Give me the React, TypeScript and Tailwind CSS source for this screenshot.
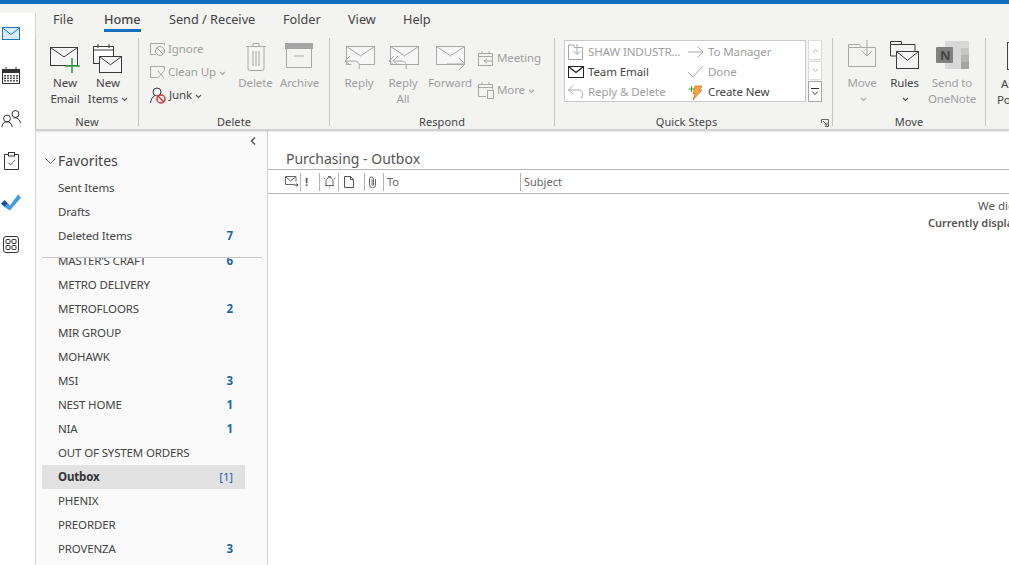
import React from "react";

const D = "#a8a8a8";
const K = "#3a3a3a";

const Svg = ({ w, h, children, className = "" }: { w: number; h: number; children: React.ReactNode; className?: string }) => (
  <svg width={w} height={h} viewBox={`0 0 ${w} ${h}`} fill="none" className={`block shrink-0 ${className}`}>
    {children}
  </svg>
);

const Chev = ({ c = "#555", s = 7 }: { c?: string; s?: number }) => (
  <svg width={s} height={5} viewBox="0 0 7 5" fill="none" className="inline-block ml-[3px] align-middle">
    <path d="M1 1l2.500 2.500L6 1" stroke={c} strokeWidth="1.100" />
  </svg>
);

const Env = ({ x, y, w, h, c, fill = "#f6f6f6" }: { x: number; y: number; w: number; h: number; c: string; fill?: string }) => (
  <g>
    <rect x={x + 0.5} y={y + 0.5} width={w} height={h} fill={fill} stroke={c} />
    <path d={`M${x + 0.5} ${y + 0.5}L${x + w / 2 + 0.5} ${y + h * 0.55}L${x + w + 0.5} ${y + 0.5}`} stroke={c} />
  </g>
);

const Big = ({ icon, label, cx, dis }: { icon: React.ReactNode; label: React.ReactNode; cx: number; dis?: boolean }) => (
  <div className={`flex flex-col items-center text-center leading-[16px] ${dis ? "text-[#a0a0a0]" : "text-[#444]"}`} style={{ width: cx }}>
    <div className="h-[35px] flex items-end justify-center">{icon}</div>
    <div className="mt-[2px] whitespace-nowrap">{label}</div>
  </div>
);

const Group = ({ w, label, children, right, labelClass = "" }: { w: number; label: string; children: React.ReactNode; right?: React.ReactNode; labelClass?: string }) => (
  <div className="relative flex flex-col shrink-0 border-r border-[#c6c6c6] mt-[2px] mb-[3px]" style={{ width: w }}>
    <div className="flex flex-1 min-h-0">{children}</div>
    <div className={`text-center text-[#444] leading-[14px] h-[14px] text-[11px] tracking-[0.1px] -mb-[3px] ${labelClass}`}>{label}</div>
    {right}
  </div>
);

const Small = ({ icon, text, dis }: { icon: React.ReactNode; text: React.ReactNode; dis?: boolean }) => (
  <div className={`flex items-center h-[20px] gap-[3px] whitespace-nowrap ${dis ? "text-[#a0a0a0]" : "text-[#444]"}`}>
    {icon}
    <span>{text}</span>
  </div>
);

function Rail() {
  return (
    <div className="w-[36px] shrink-0 mt-[9px] bg-white border-r border-[#d4d4d4] flex flex-col items-center pr-[13px] pt-[14px]">
      <Svg w={18} h={13}>
        <rect x=".5" y=".5" width="17" height="12" fill="#d9ecfa" stroke="#1b76c4" />
        <path d="M.5 1L9 7.500 17.500 1" stroke="#1b76c4" />
      </Svg>
      <Svg w={18} h={17} className="mt-[27px]">
        <rect x=".5" y="2.500" width="17" height="14" stroke="#333" />
        <rect x="1" y="3" width="16" height="3" fill="#333" />
        <path d="M4 0v3M14 0v3" stroke="#333" />
        {[8, 10.5, 13].map((y) => [3, 6, 9, 12, 15].map((x) => <rect key={`${x}${y}`} x={x - 0.8} y={y} width="1.600" height="1.600" fill="#333" />))}
      </Svg>
      <Svg w={20} h={17} className="mt-[26px]">
        <circle cx="6" cy="8.500" r="3.400" stroke="#333" />
        <path d="M.8 17c.5-3.600 2.400-5.300 5.200-5.300s4.700 1.700 5.200 5.300" stroke="#333" />
        <circle cx="14.500" cy="4" r="3.500" stroke="#333" />
        <path d="M12.500 8c2-.6 6 .2 7 5" stroke="#333" />
      </Svg>
      <Svg w={15} h={18} className="mt-[25px]">
        <path d="M4.500 2.500H.5v15h14v-15h-4" stroke="#333" />
        <rect x="4.500" y=".5" width="6" height="3.500" stroke="#333" fill="#fff" />
        <path d="M4 10.500l2.500 2.500L11 8" stroke="#666" />
      </Svg>
      <Svg w={20} h={17} className="mt-[24px]">
        <path d="M0 9.500L3.500 6l3.500 3.500L3.500 13z" fill="#1e4fa8" />
        <path d="M3.500 13L7 9.500l2 2L17 .5l3 3L9 16.500z" fill="#3f9be8" />
      </Svg>
      <Svg w={16} h={17} className="mt-[25px]">
        <rect x=".5" y=".5" width="15" height="16" rx="2.500" stroke="#333" />
        <rect x="3" y="3.500" width="4" height="4" rx=".6" stroke="#333" />
        <rect x="9" y="3.500" width="4" height="4" rx=".6" stroke="#333" />
        <rect x="3" y="9.500" width="4" height="4" rx=".6" stroke="#333" />
        <rect x="9" y="9.500" width="4" height="4" rx=".6" stroke="#333" />
      </Svg>
    </div>
  );
}

function Tabs() {
  return (
    <div className="h-[32px] flex items-start pl-[17px] pt-[3px] text-[12.700px] text-[#444] shrink-0">
      <div className="w-[51px] pt-[3px] leading-[18px]">File</div>
      <div className="w-[65px] pt-[3px] leading-[18px]">
        <span className="inline-block border-b-[3px] border-[#106ebe] pb-[1px] font-medium">Home</span>
      </div>
      <div className="w-[114px] pt-[3px] leading-[18px]">Send / Receive</div>
      <div className="w-[65px] pt-[3px] leading-[18px]">Folder</div>
      <div className="w-[55px] pt-[3px] leading-[18px]">View</div>
      <div className="pt-[3px] leading-[18px]">Help</div>
    </div>
  );
}

function Ribbon() {
  return (
    <div className="relative z-10 flex h-[94px] shrink-0 text-[11.500px] tracking-[-0.100px] shadow-[0_1px_2px_rgba(0,0,0,0.25)] border-b border-[#d0d0d0]">
      <Group w={103} label="New">
        <div className="flex pl-[8px]">
          <Big
            cx={42}
            label={<>New<br />Email</>}
            icon={
              <Svg w={32} h={30}>
                <Env x={1} y={4} w={27} h={18} c={K} />
                <path d="M23 15v15M16 23h15" stroke="#2f9e44" strokeWidth="1.500" />
              </Svg>
            }
          />
          <Big
            cx={44}
            label={<>New<br />Items<Chev /></>}
            icon={
              <Svg w={30} h={29}>
                <rect x=".5" y="2.500" width="20" height="17" stroke={K} fill="#fff" />
                <path d="M.5 6h20M5 0v4M16 0v4" stroke={K} />
                <Env x={6} y={12} w={22} h={16} c={K} />
              </Svg>
            }
          />
        </div>
      </Group>
      <Group w={191} label="Delete">
        <div className="flex">
          <div className="flex flex-col w-[97px] pl-[11px] pt-[1px] gap-[3px]">
            <Small dis text="Ignore" icon={<Svg w={15} h={14}><path d="M.5 1.500h14v2M.5 1.500v11h5" stroke={D} /><circle cx="10" cy="9" r="4.500" stroke={D} /><path d="M7 6l6 6" stroke={D} /></Svg>} />
            <Small dis text={<>Clean Up<Chev c={D} /></>} icon={<Svg w={15} h={14}><path d="M.5 1.500h14M.5 1.500v11h7M14.500 1.500v4" stroke={D} /><path d="M8 6l6 7M14 6l-6 7" stroke={D} /></Svg>} />
            <Small text={<>Junk<Chev /></>} icon={<Svg w={16} h={17}><circle cx="7" cy="5" r="4" stroke={K} /><path d="M.5 16c.5-4 2-6 4-7" stroke={K} /><circle cx="11" cy="12" r="4" stroke="#d13438" strokeWidth="1.500" fill="#fff" /><path d="M8 9l6 6" stroke="#d13438" strokeWidth="1.500" /></Svg>} />
          </div>
          <Big
            cx={39}
            dis
            label="Delete"
            icon={
              <Svg w={22} h={29} className="mb-[2px]">
                <path d="M1 4.500h20M8 4V1.500h6V4M3 5v22a1.500 1.500 0 0 0 1.500 1.500h13A1.500 1.500 0 0 0 19 27V5M8 9v15M11 9v15M14 9v15" stroke={D} />
              </Svg>
            }
          />
          <Big
            cx={49}
            dis
            label="Archive"
            icon={
              <Svg w={29} h={25} className="mb-[5px]">
                <rect x="0" y="0" width="28" height="6" fill="#a4a4a4" />
                <path d="M1.500 6v18.500h25V6M9 13h10" stroke={D} />
              </Svg>
            }
          />
        </div>
      </Group>
      <Group w={225} label="Respond">
        <div className="flex pl-[7px]">
          <Big
            cx={44}
            dis
            label="Reply"
            icon={
              <Svg w={31} h={27} className="mb-[2px]">
                <Env x={2} y={2} w={28} h={18} c={D} />
                <path d="M1 17l5-5M1 17l5 4M1 17h9c5 0 6 3 5 8" stroke={D} fill="#f3f3f2" />
              </Svg>
            }
          />
          <Big
            cx={44}
            dis
            label={<>Reply<br />All</>}
            icon={
              <Svg w={31} h={27} className="mb-[2px]">
                <Env x={2} y={2} w={28} h={18} c={D} />
                <path d="M1 17l5-5M1 17l5 4M5 17l5-5M5 17l5 4M5 17h8c4 0 6 3 5 8" stroke={D} />
              </Svg>
            }
          />
          <Big
            cx={50}
            dis
            label="Forward"
            icon={
              <Svg w={31} h={27} className="mb-[2px]">
                <Env x={1} y={2} w={28} h={18} c={D} />
                <path d="M12 20h18M24 14l6 6-6 6" stroke={D} />
              </Svg>
            }
          />
          <div className="flex flex-col pl-[3px] pt-[10px] gap-[12px]">
            <Small dis text="Meeting" icon={<Svg w={16} h={15}><path d="M.5 2.500h14v12H.5zM.5 5.500h14M4 0v3M11 0v3" stroke={D} /><path d="M6 10h8M6 10l3-2M6 10l3 2" stroke={D} /></Svg>} />
            <Small dis text={<>More<Chev c={D} /></>} icon={<Svg w={16} h={17}><path d="M8 14.500H.5v-12h14v5M.5 5.500h14M4 0v3M11 0v3" stroke={D} /><rect x="9.500" y="8.500" width="6" height="8" stroke={D} fill="#f3f3f2" /></Svg>} />
          </div>
        </div>
      </Group>
      <Group
        w={278}
        label="Quick Steps"
        labelClass="pr-[14px]"
        right={
          <Svg w={8} h={8} className="absolute right-[3px] -bottom-[1px]">
            <path d="M.5 4V.5H7.500V7.500H4" stroke="#666" />
            <path d="M2 2l4 4M3.500 6H6V3.500" stroke="#666" />
          </Svg>
        }
      >
        <div className="flex ml-[9px] mt-[2px] h-[62px]">
          <div className="w-[242px] bg-white border border-[#c9c9c9] grid grid-cols-[120px_1fr] grid-rows-[20px_20px_19px] pl-[3px] pt-[1px]">
            <Small dis text={<span className="ml-[1px]">SHAW INDUSTR...</span>} icon={<Svg w={16} h={16}><path d="M.5 6v9.500h14V3.500H6V1H.5z" stroke={D} /><path d="M9 0v10M5.500 7L9 10.500 12.500 7" stroke={D} fill="#fff" /></Svg>} />
            <Small dis text={<span className="ml-[1px]">To Manager</span>} icon={<Svg w={16} h={12}><path d="M0 6h15M9.500 .5L15 6l-5.500 5.500" stroke={D} /></Svg>} />
            <Small text={<span className="ml-[1px]">Team Email</span>} icon={<Svg w={16} h={12}><rect x=".5" y=".5" width="15" height="11" stroke="#222" fill="#fff" /><path d="M.5 .5L8 6.500l7.500-6" stroke="#222" strokeWidth="1.300" /></Svg>} />
            <Small dis text={<span className="ml-[1px]">Done</span>} icon={<Svg w={16} h={12}><path d="M0 6l5 5L15 0" stroke={D} /></Svg>} />
            <Small dis text={<span className="ml-[1px]">Reply &amp; Delete</span>} icon={<Svg w={16} h={14}><path d="M.5 5h10c4 0 5 4 3 8.500M.5 5L5 .5M.5 5L5 9" stroke={D} /></Svg>} />
            <Small text={<span className="ml-[1px]">Create New</span>} icon={<Svg w={16} h={15}><path d="M7 1h7l-2.500 4H14L5 15l2-6.500H5z" fill="#f3a73b" stroke="#c96f12" strokeWidth=".7" /><path d="M3.500 1v6M.5 4h6" stroke="#2f9e44" /></Svg>} />
          </div>
          <div className="flex flex-col ml-[2px] gap-[1px] w-[14px]">
            <div className="h-[20px] border border-[#dcdcdc] bg-white flex items-center justify-center"><Svg w={7} h={5}><path d="M1 4l2.500-2.500L6 4" stroke="#b5b5b5" /></Svg></div>
            <div className="h-[19px] border border-[#dcdcdc] bg-white flex items-center justify-center"><Svg w={7} h={5}><path d="M1 1l2.500 2.500L6 1" stroke="#b5b5b5" /></Svg></div>
            <div className="h-[21px] border border-[#a8a8a8] bg-white flex items-center justify-center"><Svg w={8} h={9}><path d="M0 1.500h8M1 4.500l3 3 3-3" stroke="#333" /></Svg></div>
          </div>
        </div>
      </Group>
      <Group w={153} label="Move">
        <div className="flex pl-[7px]">
          <Big
            cx={44}
            dis
            label={<>Move<br /><Chev c={D} /></>}
            icon={
              <Svg w={29} h={29} className="mb-[4px]">
                <path d="M.5 7.500h27v19H.500zM.5 7.500V4.500h11l2 3" stroke={D} />
                <path d="M19 0v15M14 11l5 5 5-5" stroke={D} fill="none" />
              </Svg>
            }
          />
          <Big
            cx={41}
            label={<>Rules<br /><Chev /></>}
            icon={
              <Svg w={29} h={30} className="mb-[3px]">
                <path d="M.5 4.500V16h8M.5 1.500h11v3H.5zM11 4.500h14v7" stroke={K} />
                <Env x={6} y={11} w={22} h={17} c={K} />
              </Svg>
            }
          />
          <Big
            cx={54}
            dis
            label={<>Send to<br />OneNote</>}
            icon={
              <Svg w={33} h={30} className="mb-[3px]">
                <rect x="9" y="1" width="24" height="28" fill="#d8d8d8" />
                <rect x="25" y="8" width="8" height="7" fill="#c6c6c6" />
                <rect x="25" y="15" width="8" height="7" fill="#b4b4b4" />
                <rect x="25" y="22" width="8" height="7" fill="#a4a4a4" />
                <rect x="0" y="7" width="17" height="16" rx="1" fill="#808080" />
                <text x="4" y="20" fontSize="13" fontWeight="700" fill="#444" fontFamily="Noto Sans">N</text>
              </Svg>
            }
          />
        </div>
      </Group>
      <div className="flex-1 min-w-0 overflow-hidden pl-[11px] pt-[6px] text-[#444] leading-[16px] whitespace-nowrap">
        <div className="ml-[10px] w-[10px] h-[28px] border border-r-0 border-[#444]" />
        <div className="pl-[4px] mt-[6px]">As</div>
        <div>Po</div>
      </div>
    </div>
  );
}

const Row = ({ name, n, active }: { name: string; n?: string; active?: boolean }) => (
  <div className={`h-[24px] flex items-center justify-between pl-[16px] pr-[12px] whitespace-nowrap ${active ? "bg-[#e1e1e1] font-bold text-[#333]" : "text-[#444]"}`}>
    <span>{name}</span>
    {n && <span className={`text-[#1f63a8] ${active ? "font-normal" : "font-bold"}`}>{n}</span>}
  </div>
);

function Folders() {
  const rows: [string, string?][] = [
    ["MASTER'S CRAFT", "6"],
    ["METRO DELIVERY"],
    ["METROFLOORS", "2"],
    ["MIR GROUP"],
    ["MOHAWK"],
    ["MSI", "3"],
    ["NEST HOME", "1"],
    ["NIA", "1"],
    ["OUT OF SYSTEM ORDERS"],
  ];
  return (
    <div className="w-[232px] shrink-0 bg-[#fafafa] border-r border-[#d4d4d4] text-[11.500px] tracking-[-0.150px] pl-[6px] flex flex-col overflow-hidden">
      <div className="h-[128px] shrink-0 border-b border-[#c9c9c9] mr-[5px] relative">
        <div className="absolute right-[6px] top-[7px]">
          <Svg w={6} h={8}><path d="M5 .5L1.500 4 5 7.500" stroke="#555" strokeWidth="1.500" /></Svg>
        </div>
        <div className="flex items-center pt-[20px] h-[41px] pl-[3px] text-[14px] tracking-normal text-[#444]">
          <Svg w={11} h={6} className="mr-[2px]"><path d="M.5 .5L5.500 5.500 10.500 .5" stroke="#555" /></Svg>
          <span>Favorites</span>
        </div>
        <div className="w-[203px] mt-[5px]">
          <Row name="Sent Items" />
          <Row name="Drafts" />
          <Row name="Deleted Items" n="7" />
        </div>
      </div>
      <div className="flex-1 min-h-0 overflow-hidden">
        <div className="w-[203px] -mt-[9px]">
          {rows.map(([a, b]) => <Row key={a} name={a} n={b} />)}
          <Row name="Outbox" n="[1]" active />
          <Row name="PHENIX" />
          <Row name="PREORDER" />
          <Row name="PROVENZA" n="3" />
        </div>
      </div>
    </div>
  );
}

const Cell = ({ w, children }: { w: number; children?: React.ReactNode }) => (
  <div className="flex items-center border-r border-[#b4b4b4] h-[18px] shrink-0" style={{ width: w }}>{children}</div>
);

function Messages() {
  return (
    <div className="flex-1 min-w-0 bg-white overflow-hidden flex flex-col">
      <div className="h-[40px] shrink-0 pl-[18px] pt-[19px] text-[14px] leading-[20px] text-[#555] border-b border-[#b4b4b4]">Purchasing - Outbox</div>
      <div className="h-[24px] shrink-0 border-b border-[#b4b4b4] flex items-center text-[11px] text-[#666]">
        <Cell w={33}>
          <Svg w={13} h={11} className="ml-[17px]"><path d="M9 8.500H.5V.5h10.500v5M.5 .5L5.500 5 11 .5" stroke="#666" /><path d="M9 9h4M11.500 7.500L13 9l-1.500 1.500" stroke="#444" /></Svg>
        </Cell>
        <Cell w={19}><span className="ml-[4px] font-bold leading-none text-[#555]">!</span></Cell>
        <Cell w={19}><Svg w={13} h={13} className="ml-[3px]"><path d="M2 10.500h9M3 10V6c0-2 1.500-3.500 3.500-3.500S10 4 10 6v4M5 1.500h3M.5 3l1.500 1M12.500 3L11 4M6 12h1" stroke="#666" /></Svg></Cell>
        <Cell w={26}><Svg w={10} h={12} className="ml-[5px]"><path d="M.5 .5h6l3 3v8h-9zM6.500 .5v3h3" stroke="#555" /></Svg></Cell>
        <Cell w={19}><Svg w={9} h={12} className="ml-[3px]"><path d="M7.500 3v6a3 3 0 0 1-6 0V3a2 2 0 0 1 4 0v6a.8.8 0 0 1-1.500 0V3.500" stroke="#666" /></Svg></Cell>
        <Cell w={137}><span className="ml-[3px] mt-[2px]">To</span></Cell>
        <span className="ml-[3px] mt-[2px]">Subject</span>
      </div>
      <div className="pl-[660px] pt-[3px] text-[11px] leading-[17px] whitespace-nowrap text-[#555]">
        <div className="pl-[50px] text-[11.500px]">We didn't find anything to show here.</div>
        <div className="font-semibold">Currently displaying items from: Outbox</div>
      </div>
    </div>
  );
}

export default function App() {
  return (
    <div className="w-[1009px] h-[565px] overflow-hidden flex flex-col bg-[#f3f3f2]" style={{ fontFamily: '"Noto Sans", sans-serif' }}>
      <div className="h-[4px] bg-[#106ebe] shrink-0" />
      <div className="flex flex-1 min-h-0">
        <Rail />
        <div className="flex-1 min-w-0 flex flex-col">
          <Tabs />
          <Ribbon />
          <div className="flex flex-1 min-h-0">
            <Folders />
            <Messages />
          </div>
        </div>
      </div>
    </div>
  );
}
